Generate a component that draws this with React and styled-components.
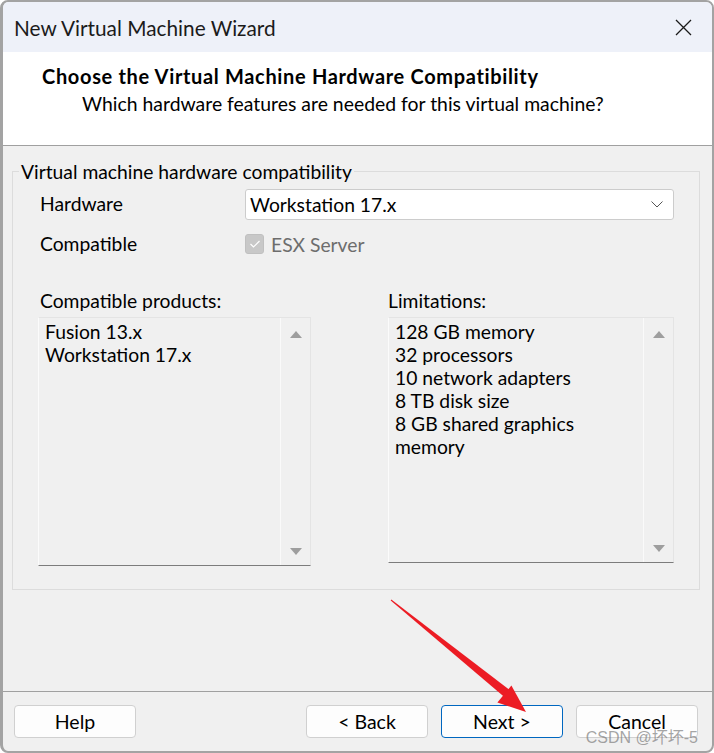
import styled, { createGlobalStyle } from "styled-components";

const GlobalStyle = createGlobalStyle`
  html, body {
    margin: 0;
    padding: 0;
    background: #ffffff;
  }
  * {
    box-sizing: border-box;
  }
`;

const FONT = `"Segoe UI", Lato, "Noto Sans", sans-serif`;

export default function App() {
  return (
    <>
      <GlobalStyle />
      <StyledWindow>
        <StyledTitleBar>
          <StyledTitle>New Virtual Machine Wizard</StyledTitle>
          <StyledClose type="button" aria-label="Close">
            <svg width="17" height="17" viewBox="0 0 17 17">
              <path d="M1 1 L16 16 M16 1 L1 16" stroke="#1a1a1a" strokeWidth="1.3" />
            </svg>
          </StyledClose>
        </StyledTitleBar>

        <StyledHeader>
          <StyledHeadline>Choose the Virtual Machine Hardware Compatibility</StyledHeadline>
          <StyledSubline>Which hardware features are needed for this virtual machine?</StyledSubline>
        </StyledHeader>

        <StyledBody>
          <StyledGroup>
            <StyledLegend>Virtual machine hardware compatibility</StyledLegend>

            <StyledFormRow>
              <StyledLabel>Hardware</StyledLabel>
              <StyledSelect>
                <span>Workstation 17.x</span>
                <svg width="12" height="7" viewBox="0 0 12 7">
                  <path d="M0.5 0.5 L6 6 L11.5 0.5" fill="none" stroke="#555" strokeWidth="1" />
                </svg>
              </StyledSelect>
            </StyledFormRow>

            <StyledFormRow $compact>
              <StyledLabel>Compatible</StyledLabel>
              <StyledCheckRow>
                <StyledCheckbox>
                  <svg width="12" height="10" viewBox="0 0 12 10">
                    <path d="M1.5 5 L4.5 8 L10.5 2" fill="none" stroke="#ffffff" strokeWidth="1.2" />
                  </svg>
                </StyledCheckbox>
                ESX Server
              </StyledCheckRow>
            </StyledFormRow>

            <StyledLists>
              <StyledListColumn>
                <StyledLabel $indent={2}>Compatible products:</StyledLabel>
                <StyledListBox $height={249}>
                  <StyledListText>
                    <div>Fusion 13.x</div>
                    <div>Workstation 17.x</div>
                  </StyledListText>
                  <StyledScroll>
                    <StyledArrow />
                    <StyledArrow $down />
                  </StyledScroll>
                </StyledListBox>
              </StyledListColumn>
              <StyledListColumn>
                <StyledLabel $indent={-1}>Limitations:</StyledLabel>
                <StyledListBox $height={246}>
                  <StyledListText>
                    <div>128 GB memory</div>
                    <div>32 processors</div>
                    <div>10 network adapters</div>
                    <div>8 TB disk size</div>
                    <div>8 GB shared graphics</div>
                    <div>memory</div>
                  </StyledListText>
                  <StyledScroll>
                    <StyledArrow />
                    <StyledArrow $down />
                  </StyledScroll>
                </StyledListBox>
              </StyledListColumn>
            </StyledLists>
          </StyledGroup>
        </StyledBody>

        <StyledFooter>
          <StyledButton type="button">Help</StyledButton>
          <StyledSpacer />
          <StyledButton type="button">&lt; Back</StyledButton>
          <StyledButton type="button" $primary>Next &gt;</StyledButton>
          <StyledButton type="button">Cancel</StyledButton>
        </StyledFooter>

        <StyledArrowOverlay width="714" height="753" viewBox="0 0 714 753">
          <polygon
            points="390.7,600.4 391.3,599.6 512.8,692.3 507.0,699.3"
            fill="#ec1c24"
          />
          <polygon points="526,712 497.4,702.6 511.4,685.6" fill="#ec1c24" />
        </StyledArrowOverlay>

        <StyledWatermark>CSDN @坏坏-5</StyledWatermark>
      </StyledWindow>
    </>
  );
}

const StyledWindow = styled.div`
  position: relative;
  width: 714px;
  height: 753px;
  display: flex;
  flex-direction: column;
  border: 2px solid #a3a3a3;
  border-left-width: 3px;
  border-radius: 8px;
  overflow: hidden;
  background: #f0f0f0;
  font-family: ${FONT};
  color: #000;
`;

const StyledTitleBar = styled.div`
  height: 50px;
  flex-shrink: 0;
  display: flex;
  align-items: center;
  justify-content: space-between;
  padding: 0 20px 0 11px;
  background: #eef1f9;
`;

const StyledTitle = styled.div`
  font-size: 20.8px;
  color: #1b1b1b;
`;

const StyledClose = styled.button`
  border: none;
  background: transparent;
  padding: 0;
  display: flex;
`;

const StyledHeader = styled.header`
  height: 94px;
  flex-shrink: 0;
  background: #ffffff;
  border-bottom: 1px solid #a0a0a0;
  padding: 12px 0 0 39px;
`;

const StyledHeadline = styled.h1`
  margin: 0;
  font-size: 20px;
  font-weight: 700;
  letter-spacing: 0.66px;
  line-height: 25px;
`;

const StyledSubline = styled.p`
  margin: 2px 0 0 40px;
  font-size: 19.4px;
  line-height: 25px;
`;

const StyledBody = styled.main`
  flex: 1;
  padding: 14px 12px 0 9px;
`;

const StyledGroup = styled.fieldset`
  height: 430px;
  margin: 0;
  padding: 5px 25px 0 25px;
  border: 1px solid #dcdcdc;
  border-radius: 0;
`;

const StyledLegend = styled.legend`
  margin-left: -19px;
  padding: 0 2px;
  font-size: 19.3px;
  line-height: 23px;
`;

const StyledFormRow = styled.div`
  display: grid;
  grid-template-columns: 207px 1fr;
  align-items: center;
  height: ${(p) => (p.$compact ? "48px" : "32px")};
`;

const StyledLabel = styled.div`
  padding-left: ${(p) => (p.$indent ?? 2)}px;
  font-size: 19.3px;
  line-height: 24px;
`;

const StyledSelect = styled.div`
  height: 31px;
  display: flex;
  align-items: center;
  justify-content: space-between;
  padding: 0 10px 0 4px;
  background: #ffffff;
  border: 1px solid #cccccc;
  border-radius: 3px;
  font-size: 19.3px;
`;

const StyledCheckRow = styled.div`
  display: flex;
  align-items: center;
  gap: 7px;
  font-size: 19.3px;
  color: #6d6d6d;
`;

const StyledCheckbox = styled.span`
  width: 19px;
  height: 20px;
  display: flex;
  align-items: center;
  justify-content: center;
  background: #c8c8c8;
  border: 1px solid #c0c0c0;
  border-radius: 3px;
`;

const StyledLists = styled.div`
  display: grid;
  grid-template-columns: 273px 286px;
  justify-content: space-between;
  margin-top: 21px;
`;

const StyledListColumn = styled.div`
  display: flex;
  flex-direction: column;
  gap: 4px;
`;

const StyledListBox = styled.div`
  height: ${(p) => p.$height}px;
  display: flex;
  border: 1px solid #e4e4e4;
  border-left-color: #fbfbfb;
  border-bottom: 1px solid #7c7c7c;
  background: #f0f0f0;
`;

const StyledListText = styled.div`
  flex: 1;
  padding: 2px 6px;
  font-size: 19.3px;
  line-height: 23px;
`;

const StyledScroll = styled.div`
  width: 30px;
  display: flex;
  flex-direction: column;
  justify-content: space-between;
  align-items: center;
  padding: 13px 0 10px;
  border-left: 1px solid #fafafa;
`;

const StyledArrow = styled.span`
  width: 0;
  height: 0;
  border-left: 6px solid transparent;
  border-right: 6px solid transparent;
  ${(p) =>
    p.$down
      ? "border-top: 7px solid #9e9e9e;"
      : "border-bottom: 7px solid #9e9e9e;"}
`;

const StyledFooter = styled.footer`
  height: 60px;
  flex-shrink: 0;
  display: flex;
  align-items: flex-start;
  gap: 13px;
  padding: 13px 14px 0 11px;
  border-top: 1px solid #a0a0a0;
`;

const StyledSpacer = styled.div`
  flex: 1;
`;

const StyledButton = styled.button`
  width: 122px;
  height: 33px;
  font-family: ${FONT};
  font-size: 19.5px;
  color: #000;
  background: #fdfdfd;
  border: 1px solid ${(p) => (p.$primary ? "#0067c0" : "#d0d0d0")};
  border-radius: 4px;
  padding: 0;
`;

const StyledArrowOverlay = styled.svg`
  position: absolute;
  left: -3px;
  top: -2px;
  pointer-events: none;
`;

const StyledWatermark = styled.div`
  position: absolute;
  right: 14px;
  bottom: 3px;
  font-family: "Liberation Sans", "Noto Sans CJK SC", sans-serif;
  font-size: 16px;
  color: rgba(125, 125, 125, 0.7);
  pointer-events: none;
`;
